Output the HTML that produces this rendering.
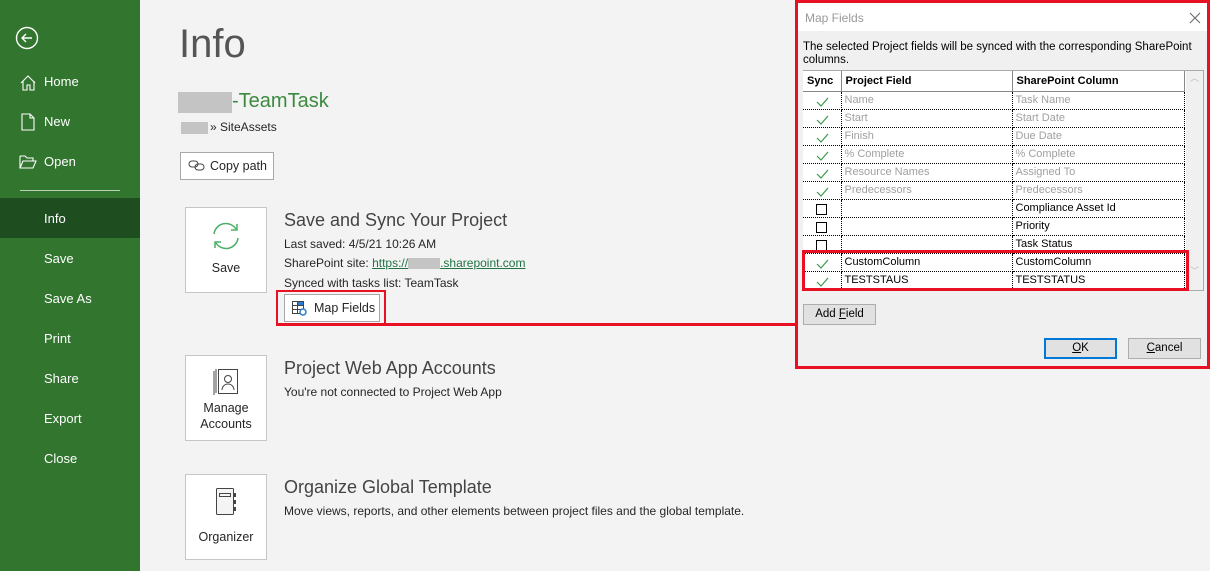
<!DOCTYPE html>
<html><head><style>
*{margin:0;padding:0;box-sizing:border-box}
body{width:1210px;height:571px;overflow:hidden;font-family:"Segoe UI","Liberation Sans",sans-serif;background:#f3f3f3;position:relative;color:#262626}
.a{position:absolute;white-space:nowrap}
#side{position:absolute;left:0;top:0;width:140px;height:571px;background:#31752f;color:#fff;font-size:13px}
#side .a{left:44px}
.tile{position:absolute;left:185px;width:82px;background:#fff;border:1px solid #c6c6c6;font-size:12.5px;text-align:center}
#dlg{position:absolute;left:795px;top:0;width:415px;height:369px;background:#f0f0f0;border:3px solid #e81123;font-family:"Liberation Sans",sans-serif;font-size:11.5px;color:#000}
table{border-collapse:collapse;position:absolute;left:5px;top:68px;width:382px;background:#fff;table-layout:fixed}
tr{height:18px}
td{height:18px;max-height:18px;border-right:1px dotted #000;border-bottom:1px dotted #000;padding:0 0 0 3px;font-size:11px;line-height:16px;overflow:hidden}
th{height:20px;text-align:left;padding-left:4px;font-size:11px;border-right:1px solid #888;border-bottom:1px solid #888;background:#fff}
.g td{color:#a0a0a0}
.ck{text-align:center;padding:0}
.ck svg{display:block;margin:3px auto 0}
.bx{display:block;width:11px;height:11px;border:1px solid #000;margin:3px auto 0}
.btn{position:absolute;background:#e1e1e1;border:1px solid #adadad;text-align:center;line-height:19px;font-size:11.5px}
</style></head><body>
<div id="side">
<svg class="a" style="left:15px;top:26px" width="24" height="24"><circle cx="12" cy="12" r="10.5" fill="none" stroke="#fff" stroke-width="1.4"/><path d="M17 12H7M11 8l-4 4 4 4" fill="none" stroke="#fff" stroke-width="1.4"/></svg>
<svg class="a" style="left:19px;top:74px" width="18" height="18"><path d="M2 9L9 2l7 7M4 7v9h4v-5h3v5h4V7" fill="none" stroke="#fff" stroke-width="1.1"/></svg>
<div class="a" style="top:74px">Home</div>
<svg class="a" style="left:21px;top:113px" width="14" height="18"><path d="M1 1h8l4 4v12H1zM9 1v4h4" fill="none" stroke="#fff" stroke-width="1.1"/></svg>
<div class="a" style="top:114px">New</div>
<svg class="a" style="left:19px;top:155px" width="18" height="14"><path d="M1 1h5l2 2h6v3M1 1v12h13l3-7H4l-3 7" fill="none" stroke="#fff" stroke-width="1.1"/></svg>
<div class="a" style="top:154px">Open</div>
<div class="a" style="left:20px;top:190px;width:100px;height:1px;background:#b8d0b8"></div>
<div class="a" style="left:0;top:198px;width:140px;height:40px;background:#1e4e1f"></div>
<div class="a" style="top:211px">Info</div>
<div class="a" style="top:251px">Save</div>
<div class="a" style="top:291px">Save As</div>
<div class="a" style="top:331px">Print</div>
<div class="a" style="top:371px">Share</div>
<div class="a" style="top:411px">Export</div>
<div class="a" style="top:451px">Close</div>
</div>

<div class="a" style="left:179px;top:22px;font-size:40px;color:#555">Info</div>
<div class="a" style="left:178px;top:92px;width:54px;height:21px;background:#c4c4c4"></div>
<div class="a" style="left:232px;top:90px;font-size:20px;color:#3b8a3e">-TeamTask</div>
<div class="a" style="left:181px;top:122px;width:27px;height:12px;background:#c4c4c4"></div>
<div class="a" style="left:210px;top:120px;font-size:12px">» SiteAssets</div>
<div class="a" style="left:180px;top:152px;width:94px;height:28px;background:#fff;border:1px solid #a8a8a8;font-size:12.5px;line-height:26px;padding-left:29px">Copy path</div>
<svg class="a" style="left:188px;top:159px" width="18" height="13"><rect x="1" y="2" width="9" height="6" rx="3" fill="none" stroke="#444"/><rect x="7" y="5" width="9" height="6" rx="3" fill="none" stroke="#444"/></svg>

<div class="tile" style="top:207px;height:86px"><svg style="margin-top:12px" width="32" height="32"><path d="M4 14A12 12 0 0 1 26 9M28 18A12 12 0 0 1 6 23" fill="none" stroke="#4caf65" stroke-width="1.5"/><path d="M27 4v6h-6M5 28v-6h6" fill="none" stroke="#4caf65" stroke-width="1.5"/></svg><div style="margin-top:6px">Save</div></div>
<div class="a" style="left:284px;top:210px;font-size:18px;color:#444">Save and Sync Your Project</div>
<div class="a" style="left:284px;top:237px;font-size:12px">Last saved: 4/5/21 10:26 AM</div>
<div class="a" style="left:284px;top:256px;font-size:12px">SharePoint site: <span style="color:#217346;text-decoration:underline">https://<span style="display:inline-block;width:32px;height:11px;background:#c4c4c4;vertical-align:middle"></span>.sharepoint.com</span></div>
<div class="a" style="left:284px;top:276px;font-size:12px">Synced with tasks list: TeamTask</div>
<div class="a" style="left:276px;top:290px;width:110px;height:36px;border:2px solid #e81123"></div>
<div class="a" style="left:276px;top:323px;width:521px;height:3px;background:#e81123"></div>
<div class="a" style="left:284px;top:294px;width:96px;height:28px;background:#fff;border:1px solid #a8a8a8;font-size:12.5px;line-height:26px;padding-left:29px">Map Fields</div>
<svg class="a" style="left:292px;top:301px" width="16" height="15"><rect x="0.5" y="0.5" width="11" height="12" fill="none" stroke="#444"/><path d="M0.5 4.5h11M0.5 8.5h11M5.5 .5v12" stroke="#444"/><rect x="6" y="1" width="5" height="3" fill="#2b7cd3"/><circle cx="11" cy="11" r="3" fill="#fff" stroke="#2b7cd3" stroke-width="1.5"/></svg>

<div class="tile" style="top:355px;height:86px"><svg style="margin-top:11px" width="28" height="30"><path d="M2 4v24M4 2v24" stroke="#444"/><rect x="6.5" y="2.5" width="19" height="24" fill="none" stroke="#444"/><circle cx="16" cy="12" r="3.5" fill="none" stroke="#444"/><path d="M10 23a6 6 0 0 1 12 0" fill="none" stroke="#444"/></svg><div style="line-height:16px;margin-top:0">Manage<br>Accounts</div></div>
<div class="a" style="left:284px;top:358px;font-size:18px;color:#444">Project Web App Accounts</div>
<div class="a" style="left:284px;top:385px;font-size:12px">You're not connected to Project Web App</div>

<div class="tile" style="top:474px;height:86px"><svg style="margin-top:12px" width="28" height="30"><rect x="4.5" y="1.5" width="17" height="26" rx="1" fill="#f4f4f4" stroke="#444"/><rect x="7.5" y="6.5" width="11" height="3" fill="none" stroke="#444"/><rect x="21" y="6" width="3" height="4" fill="#444"/><rect x="21" y="13" width="3" height="4" fill="#444"/><rect x="21" y="20" width="3" height="4" fill="#444"/></svg><div style="margin-top:10px">Organizer</div></div>
<div class="a" style="left:284px;top:477px;font-size:18px;color:#444">Organize Global Template</div>
<div class="a" style="left:284px;top:504px;font-size:12px">Move views, reports, and other elements between project files and the global template.</div>

<div id="dlg">
<div class="a" style="left:0;top:0;width:409px;height:28px;background:#fff"></div>
<div class="a" style="left:7px;top:8px;font-size:12px;color:#999">Map Fields</div>
<svg class="a" style="left:391px;top:9px" width="12" height="12"><path d="M1 1l10 10M11 1L1 11" stroke="#666"/></svg>
<div class="a" style="left:5px;top:38px;line-height:13px">The selected Project fields will be synced with the corresponding SharePoint<br>columns.</div>
<div class="a" style="left:5px;top:67px;width:401px;height:221px;border:1px solid #aaa;background:#fff"></div>
<div class="a" style="left:388px;top:68px;width:17px;height:219px;background:#f0f0f0;color:#bbb;font-size:9px;text-align:center">︿<div style="margin-top:180px">﹀</div></div>
<table>
<colgroup><col style="width:38px"><col style="width:171px"><col></colgroup>
<tr style="height:20px"><th>Sync</th><th>Project Field</th><th>SharePoint Column</th></tr>
<tr class="g"><td class="ck"><svg width="14" height="11"><path d="M2 6l4 4 7-8" fill="none" stroke="#3a9a4a" stroke-width="1.2"/></svg></td><td>Name</td><td>Task Name</td></tr>
<tr class="g"><td class="ck"><svg width="14" height="11"><path d="M2 6l4 4 7-8" fill="none" stroke="#3a9a4a" stroke-width="1.2"/></svg></td><td>Start</td><td>Start Date</td></tr>
<tr class="g"><td class="ck"><svg width="14" height="11"><path d="M2 6l4 4 7-8" fill="none" stroke="#3a9a4a" stroke-width="1.2"/></svg></td><td>Finish</td><td>Due Date</td></tr>
<tr class="g"><td class="ck"><svg width="14" height="11"><path d="M2 6l4 4 7-8" fill="none" stroke="#3a9a4a" stroke-width="1.2"/></svg></td><td>% Complete</td><td>% Complete</td></tr>
<tr class="g"><td class="ck"><svg width="14" height="11"><path d="M2 6l4 4 7-8" fill="none" stroke="#3a9a4a" stroke-width="1.2"/></svg></td><td>Resource Names</td><td>Assigned To</td></tr>
<tr class="g"><td class="ck"><svg width="14" height="11"><path d="M2 6l4 4 7-8" fill="none" stroke="#3a9a4a" stroke-width="1.2"/></svg></td><td>Predecessors</td><td>Predecessors</td></tr>
<tr><td class="ck"><span class="bx"></span></td><td></td><td>Compliance Asset Id</td></tr>
<tr><td class="ck"><span class="bx"></span></td><td></td><td>Priority</td></tr>
<tr><td class="ck"><span class="bx"></span></td><td></td><td>Task Status</td></tr>
<tr><td class="ck"><svg width="14" height="11"><path d="M2 6l4 4 7-8" fill="none" stroke="#3a9a4a" stroke-width="1.2"/></svg></td><td>CustomColumn</td><td>CustomColumn</td></tr>
<tr><td class="ck"><svg width="14" height="11"><path d="M2 6l4 4 7-8" fill="none" stroke="#3a9a4a" stroke-width="1.2"/></svg></td><td>TESTSTAUS</td><td>TESTSTATUS</td></tr>
</table>
<div class="a" style="left:4px;top:247px;width:387px;height:41px;border:3px solid #e81123"></div>
<div class="btn" style="left:5px;top:301px;width:73px;height:21px">Add <u>F</u>ield</div>
<div class="btn" style="left:246px;top:335px;width:73px;height:21px;border:2px solid #0078d7;line-height:17px"><u>O</u>K</div>
<div class="btn" style="left:330px;top:335px;width:73px;height:21px"><u>C</u>ancel</div>
</div>
</body></html>
